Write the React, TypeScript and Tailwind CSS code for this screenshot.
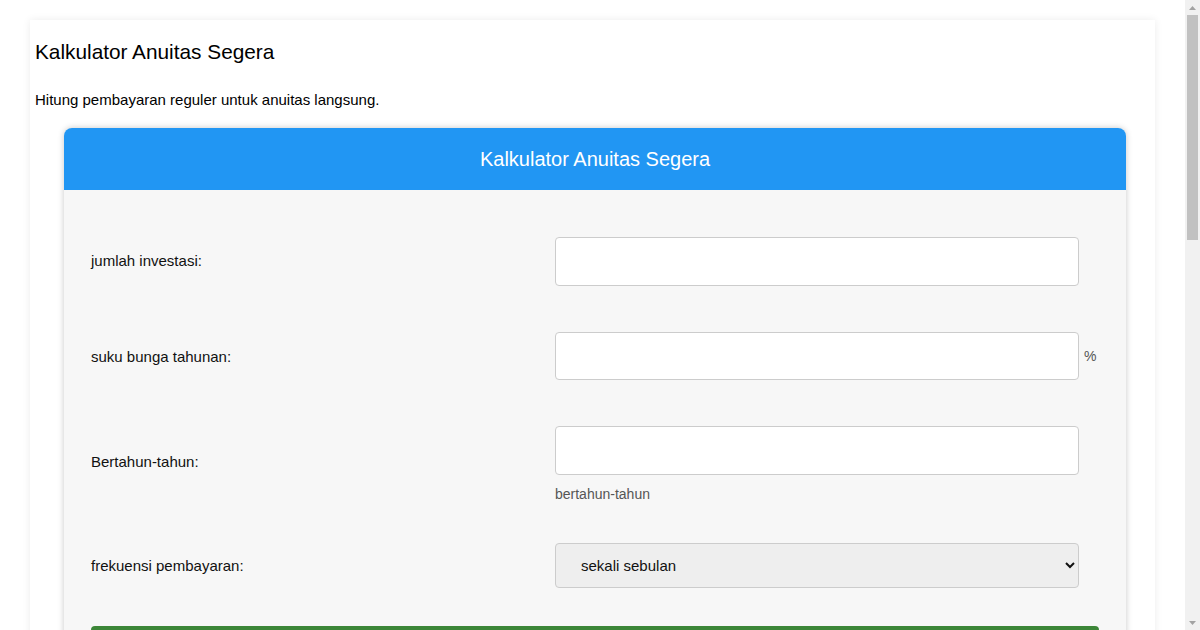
import React from "react";

function Scrollbar() {
  return (
    <div className="flex h-[630px] w-[15px] shrink-0 flex-col bg-[#f1f1f1]">
      <div className="flex h-[15px] items-center justify-center">
        <svg width="9" height="6" viewBox="0 0 9 6">
          <path d="M4.5 1 L8 5 L1 5 Z" fill="#a3a3a3" />
        </svg>
      </div>
      <div className="mx-[2px] h-[225px] bg-[#c1c1c1]" />
      <div className="flex-1" />
      <div className="flex h-[15px] items-center justify-center">
        <svg width="9" height="6" viewBox="0 0 9 6">
          <path d="M1 1 L8 1 L4.5 5 Z" fill="#a3a3a3" />
        </svg>
      </div>
    </div>
  );
}

export default function App() {
  return (
    <div className="flex h-[630px] overflow-hidden bg-white font-['Liberation_Sans',Arial,sans-serif] text-black">
      <div className="w-[1185px] shrink-0">
        <div className="mx-[30px] mt-[20px] bg-white px-[5px] pt-[20px] pb-[40px] shadow-[0_0_8px_rgba(0,0,0,0.08)]">
          <h2 className="text-[20.8px] leading-[24px] font-normal text-black">Kalkulator Anuitas Segera</h2>
          <p className="mt-[23.5px] text-[15px] leading-[24px] text-black">
            Hitung pembayaran reguler untuk anuitas langsung.
          </p>
          <div className="mt-[16.5px] ml-[29px] w-[1062px] overflow-hidden rounded-[8px] bg-[#f7f7f7] shadow-[0_0_6px_rgba(0,0,0,0.22)]">
            <div className="flex h-[62px] items-center justify-center bg-[#2196f3] text-[20px] text-white">
              Kalkulator Anuitas Segera
            </div>
            <div className="px-[27px] pt-[24px] pb-[30px]">
              <div className="flex items-center py-[23px]">
                <label className="-mt-[2px] w-[464px] text-[15px] leading-[17px] text-[#111]">jumlah investasi:</label>
                <input type="text" className="h-[49px] w-[524px] rounded-[4px] border border-[#ccc] bg-white" />
              </div>
              <div className="flex items-center py-[23px]">
                <label className="w-[464px] text-[15px] leading-[17px] text-[#111]">suku bunga tahunan:</label>
                <input type="text" className="h-[48px] w-[524px] rounded-[4px] border border-[#ccc] bg-white" />
                <span className="ml-[5px] text-[14px] text-[#555]">%</span>
              </div>
              <div className="flex items-start py-[23px]">
                <label className="mt-[26.5px] w-[464px] text-[15px] leading-[17px] text-[#111]">Bertahun-tahun:</label>
                <div className="flex flex-col">
                  <input type="text" className="h-[49px] w-[524px] rounded-[4px] border border-[#ccc] bg-white" />
                  <span className="mt-[11px] text-[14px] leading-[17px] text-[#555]">bertahun-tahun</span>
                </div>
              </div>
              <div className="flex items-center pt-[17px] pb-[23px]">
                <label className="w-[464px] text-[15px] leading-[17px] text-[#111]">frekuensi pembayaran:</label>
                <select className="h-[45px] w-[524px] rounded-[4px] border border-[#ccc] bg-[#eeeeee] pl-[21px] pr-[4px] text-[15px] text-[#111]">
                  <option>sekali sebulan</option>
                  <option>setiap tiga bulan</option>
                  <option>setiap enam bulan</option>
                  <option>setahun sekali</option>
                </select>
              </div>
              <button className="mt-[15px] h-[60px] w-full rounded-[4px] bg-[#3c8638] pt-[30px] text-[16px] text-white">
                Menghitung
              </button>
            </div>
          </div>
        </div>
      </div>
      <Scrollbar />
    </div>
  );
}
